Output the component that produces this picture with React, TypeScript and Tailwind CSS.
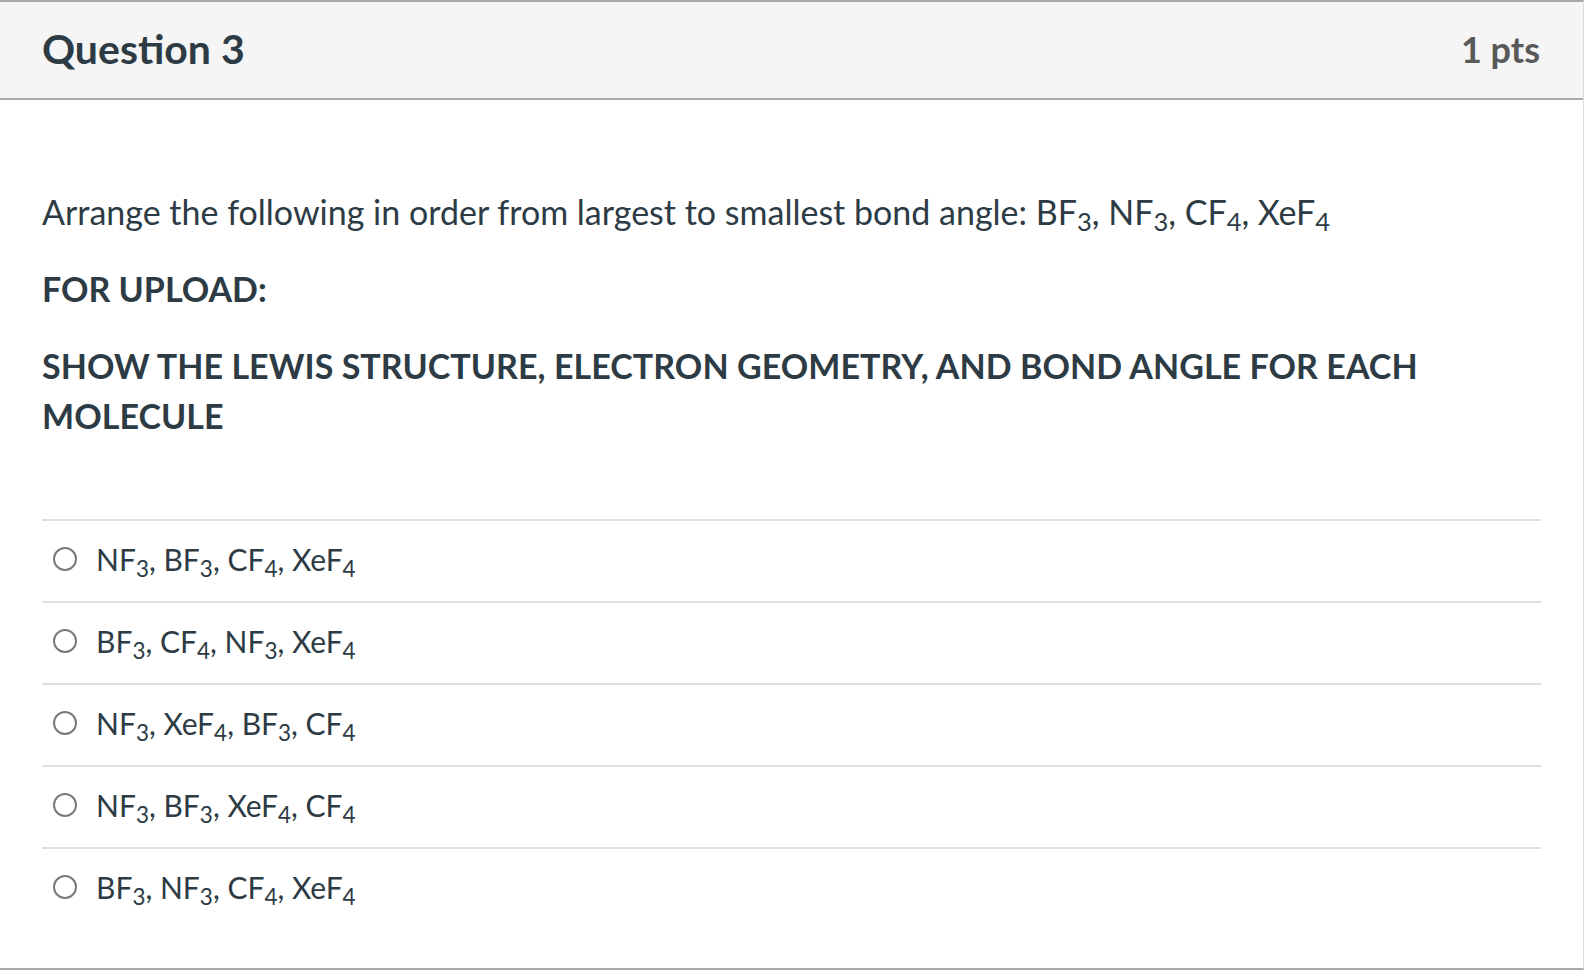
const answers: [string, string][][] = [
  [["NF", "3"], ["BF", "3"], ["CF", "4"], ["XeF", "4"]],
  [["BF", "3"], ["CF", "4"], ["NF", "3"], ["XeF", "4"]],
  [["NF", "3"], ["XeF", "4"], ["BF", "3"], ["CF", "4"]],
  [["NF", "3"], ["BF", "3"], ["XeF", "4"], ["CF", "4"]],
  [["BF", "3"], ["NF", "3"], ["CF", "4"], ["XeF", "4"]],
];

function Formula({ parts }: { parts: [string, string][] }) {
  return (
    <>
      {parts.map(([base, n], i) => (
        <span key={i}>
          {base}
          <sub>{n}</sub>
          {i < parts.length - 1 ? ", " : ""}
        </span>
      ))}
    </>
  );
}

export default function App() {
  return (
    <div className="w-[1584px] h-[970px] bg-white flex flex-col border-t-2 border-b-2 border-r border-t-[#a9a9a9] border-b-[#a9a9a9] border-r-[#dcdcdc] text-[#2d3b45] font-['Lato',sans-serif] overflow-hidden">
      {/* Header */}
      <div className="h-[98px] shrink-0 bg-[#f5f5f5] border-b-2 border-[#a9a9a9] flex items-center justify-between px-[42px] pb-[3px] box-border">
        <h2 className="text-[41px] font-bold leading-none">Question 3</h2>
        <div className="text-[36px] font-bold leading-none text-[#595959] pr-[1px]">1 pts</div>
      </div>

      {/* Body */}
      <div className="px-[42px]">
        <p className="mt-[87px] text-[34px] leading-[50px]">
          Arrange the following in order from largest to smallest bond angle:{" "}
          <Formula parts={answers[4]} />
        </p>
        <p className="mt-[27px] text-[34px] leading-[50px] font-bold">FOR UPLOAD:</p>
        <p className="mt-[27px] text-[34px] leading-[50px] font-bold tracking-[0.05px]">
          SHOW THE LEWIS STRUCTURE, ELECTRON GEOMETRY, AND BOND ANGLE FOR EACH MOLECULE
        </p>

        {/* Answers */}
        <div className="mt-[78px] flex flex-col">
          {answers.map((a, i) => (
            <div key={i} className="h-[82px] flex items-center border-t-2 border-[#dfdfdf] pb-[4px]">
              <span className="ml-[11px] w-[24px] h-[24px] rounded-full border-2 border-[#7a7a7a] shrink-0" />
              <span className="ml-[19px] text-[30px] leading-[40px]">
                <Formula parts={a} />
              </span>
            </div>
          ))}
        </div>
      </div>
    </div>
  );
}
